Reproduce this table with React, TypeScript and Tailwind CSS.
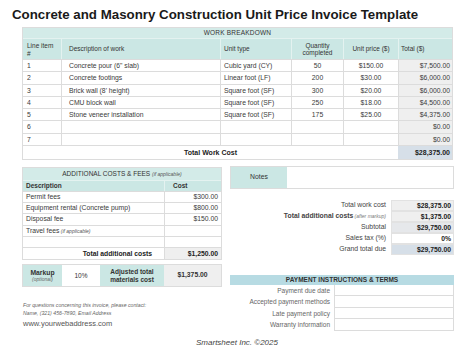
const workRows = [
  ['1', 'Concrete pour (6" slab)', 'Cubic yard (CY)', '50', '$150.00', '$7,500.00'],
  ['2', 'Concrete footings', 'Linear foot (LF)', '200', '$30.00', '$6,000.00'],
  ['3', "Brick wall (8' height)", 'Square foot (SF)', '300', '$20.00', '$6,000.00'],
  ['4', 'CMU block wall', 'Square foot (SF)', '250', '$18.00', '$4,500.00'],
  ['5', 'Stone veneer installation', 'Square foot (SF)', '175', '$25.00', '$4,375.00'],
  ['6', '', '', '', '', '$0.00'],
  ['7', '', '', '', '', '$0.00'],
];

const feeRows = [
  ['Permit fees', '$300.00'],
  ['Equipment rental (Concrete pump)', '$800.00'],
  ['Disposal fee', '$150.00'],
  ['Travel fees', ''],
  ['', ''],
];

const summaryRows = [
  { label: 'Total work cost', value: '$28,375.00', bg: 'bg-[#efefef]' },
  { label: 'Total additional costs', note: '(after markup)', value: '$1,375.00', bg: 'bg-[#efefef]' },
  { label: 'Subtotal', value: '$29,750.00', bg: 'bg-[#e6e8eb]' },
  { label: 'Sales tax (%)', value: '0%', bg: 'bg-white' },
  { label: 'Grand total due', value: '$29,750.00', bg: 'bg-[#d6dfe8]' },
];

const paymentRows = ['Payment due date', 'Accepted payment methods', 'Late payment policy', 'Warranty information'];

const workCols = 'grid grid-cols-[38px_159px_71px_52px_55px_54px]';

function WorkBreakdown() {
  return (
    <section className="ml-[22px] w-[431px] border border-[#dcdcdc]">
      {/* table title */}
      <div className="h-[10px] bg-[#d3ebe8] text-center text-[6.5px] leading-[10px] tracking-[0.2px] text-[#333]">
        WORK BREAKDOWN
      </div>

      {/* column headings */}
      <div className={`${workCols} h-[21px] bg-[#cbe7e4] text-[6.5px] leading-[7.5px] text-[#333] border-t border-[#e4f2f0]`}>
        <div className="pl-[4px] pt-[3px]">
          Line item
          <br />#
        </div>
        <div className="flex items-center pl-[7px] border-l border-[#e4f2f0]">Description of work</div>
        <div className="flex items-center pl-[3px] border-l border-[#e4f2f0]">Unit type</div>
        <div className="flex items-center justify-center text-center border-l border-[#e4f2f0]">
          Quantity
          <br />
          completed
        </div>
        <div className="flex items-center justify-center border-l border-[#e4f2f0]">Unit price ($)</div>
        <div className="flex items-center pl-[2px] border-l border-[#e4f2f0]">Total ($)</div>
      </div>

      {/* line items */}
      {workRows.map((r) => (
        <div key={r[0]} className={`${workCols} h-[12.3px] border-t border-[#dcdcdc] text-[6.8px] leading-[11px] text-[#3a3a3a]`}>
          <div className="pl-[4px]">{r[0]}</div>
          <div className="pl-[7px] border-l border-[#dcdcdc]">{r[1]}</div>
          <div className="pl-[3px] border-l border-[#dcdcdc]">{r[2]}</div>
          <div className="text-center border-l border-[#dcdcdc]">{r[3]}</div>
          <div className="text-center border-l border-[#dcdcdc]">{r[4]}</div>
          <div className="pr-[2px] text-right bg-[#efefef] border-l border-[#dcdcdc]">{r[5]}</div>
        </div>
      ))}

      {/* total */}
      <div className="grid grid-cols-[375px_54px] h-[14px] border-t border-[#dcdcdc] text-[7px] leading-[13px] font-bold text-[#222]">
        <div className="text-center">Total Work Cost</div>
        <div className="pr-[2px] text-right bg-[#d6dfe8]">$28,375.00</div>
      </div>
    </section>
  );
}

function AdditionalCosts() {
  return (
    <section className="w-[200px] border border-[#dcdcdc]">
      <div className="h-[12px] bg-[#d3ebe8] text-center text-[6.5px] leading-[12px] text-[#333]">
        ADDITIONAL COSTS &amp; FEES <span className="italic text-[5px] text-[#555]">(if applicable)</span>
      </div>
      <div className="grid grid-cols-[141px_57px] h-[11px] bg-[#cbe7e4] border-t border-[#e4f2f0] text-[6.5px] leading-[10px] font-bold text-[#333]">
        <div className="pl-[3px]">Description</div>
        <div className="pl-[8px] border-l border-[#e4f2f0]">Cost</div>
      </div>
      {feeRows.map((r, i) => (
        <div key={i} className="grid grid-cols-[141px_57px] h-[11.2px] border-t border-[#dcdcdc] text-[6.8px] leading-[10px] text-[#3a3a3a]">
          <div className="pl-[3px]">
            {r[0]}
            {r[0] === 'Travel fees' && <span className="italic text-[5px] text-[#555]"> (if applicable)</span>}
          </div>
          <div className="pr-[3px] text-right border-l border-[#dcdcdc]">{r[1]}</div>
        </div>
      ))}
      <div className="grid grid-cols-[141px_57px] h-[12px] border-t border-[#dcdcdc] text-[6.8px] leading-[11px] font-bold text-[#222]">
        <div className="pr-[12px] text-right">Total additional costs</div>
        <div className="pr-[3px] text-right bg-[#efefef] border-l border-[#dcdcdc]">$1,250.00</div>
      </div>
    </section>
  );
}

function Markup() {
  return (
    <div className="mt-[4px] grid grid-cols-[39px_38px_64px_57px] h-[23px] w-[200px] border border-[#dcdcdc] text-[#333]">
      <div className="flex flex-col items-center justify-center bg-[#cbe7e4] leading-[7px]">
        <span className="text-[6.8px] font-bold">Markup</span>
        <span className="text-[5px] italic text-[#666]">(optional)</span>
      </div>
      <div className="flex items-center justify-center text-[6.5px]">10%</div>
      <div className="flex items-center justify-center text-center bg-[#cbe7e4] text-[6.5px] font-bold leading-[7.5px]">
        Adjusted total
        <br />
        materials cost
      </div>
      <div className="flex items-center justify-center bg-[#efefef] text-[6.8px] font-bold">$1,375.00</div>
    </div>
  );
}

function Notes() {
  return (
    <div className="flex h-[23px] w-[224px] border border-[#dcdcdc]">
      <div className="w-[56px] flex items-center justify-center bg-[#cbe7e4] text-[6.8px] text-[#333]">Notes</div>
      <div className="flex-1 bg-white" />
    </div>
  );
}

function Summary() {
  return (
    <div className="mt-[11px] w-[224px]">
      {summaryRows.map((r) => (
        <div key={r.label} className="flex h-[11px] items-center">
          <div className={`w-[161px] pr-[5px] text-right text-[6.8px] text-[#444] ${r.note ? 'font-bold' : ''}`}>
            {r.label}
            {r.note && <span className="italic font-normal text-[5px] text-[#777]"> {r.note}</span>}
          </div>
          <div className={`flex-1 h-full pr-[2px] text-right text-[6.8px] leading-[10px] font-bold text-[#222] border border-[#e2e2e2] ${r.bg}`}>
            {r.value}
          </div>
        </div>
      ))}
    </div>
  );
}

function Payment() {
  return (
    <section className="mt-[20px] w-[224px]">
      <div className="h-[10px] bg-[#b7dbe3] text-center text-[6.5px] leading-[10px] font-bold text-[#333]">
        PAYMENT INSTRUCTIONS &amp; TERMS
      </div>
      {paymentRows.map((label) => (
        <div key={label} className="flex h-[11.4px]">
          <div className="w-[104px] pr-[4px] text-right text-[6.5px] leading-[11px] text-[#666]">{label}</div>
          <div className="flex-1 border-r border-b border-l border-[#dcdcdc]" />
        </div>
      ))}
    </section>
  );
}

export default function App() {
  return (
    <main className="w-[474px] h-[356px] overflow-hidden bg-white font-['Liberation_Sans',Arial,sans-serif]">
      <h1 className="h-[27px] pl-[12px] pt-[7px] text-[13.3px] leading-[16px] font-bold text-[#1a1a1a]">
        Concrete and Masonry Construction Unit Price Invoice Template
      </h1>

      <WorkBreakdown />

      <div className="flex gap-[8px] pl-[22px] mt-[6px]">
        <div className="w-[200px] pt-[1px]">
          <AdditionalCosts />
          <Markup />
          <div className="mt-[15px] pl-[1px] text-[5.2px] leading-[7.5px] italic text-[#666]">
            For questions concerning this invoice, please contact:
            <br />
            Name, (321) 456-7890, Email Address
          </div>
          <div className="mt-[2px] pl-[1px] text-[7.5px] leading-[10px] text-[#555]">www.yourwebaddress.com</div>
        </div>

        <div className="w-[224px]">
          <Notes />
          <Summary />
          <Payment />
        </div>
      </div>

      <p className="mt-[6px] text-center text-[8px] italic text-[#444]">Smartsheet Inc. ©2025</p>
    </main>
  );
}
